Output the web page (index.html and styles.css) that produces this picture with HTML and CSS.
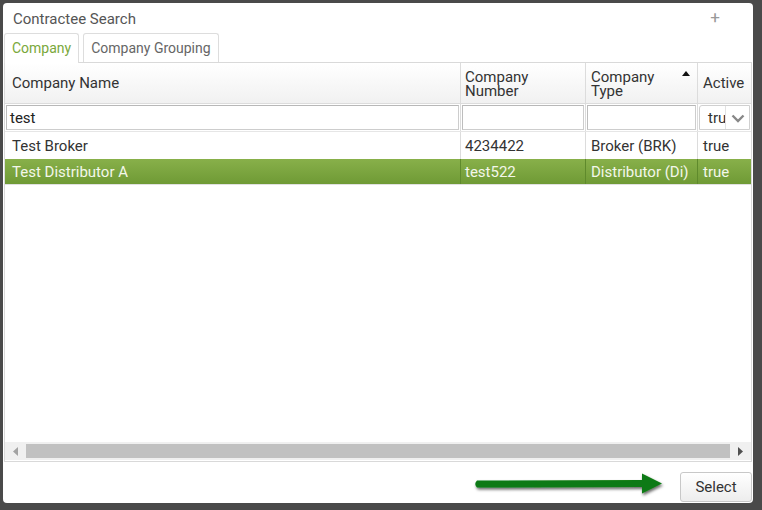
FILE: index.html
```html
<!DOCTYPE html>
<html>
<head>
<meta charset="utf-8">
<link rel="stylesheet" href="styles.css">
</head>
<body>
<div class="backdrop">
  <div class="dialog">
    <div class="titlebar">
      <span class="title">Contractee Search</span>
      <span class="plus">+</span>
    </div>
    <div class="tabs">
      <div class="tab active">Company</div>
      <div class="tab">Company Grouping</div>
    </div>
    <div class="grid">
      <div class="row head">
        <div class="cell c1"><span>Company Name</span></div>
        <div class="cell c2"><span class="two"><span class="ln">Company</span><span class="ln">Number</span></span></div>
        <div class="cell c3"><span class="two"><span class="ln">Company</span><span class="ln">Type</span></span><span class="sort"></span></div>
        <div class="cell c4"><span>Active</span></div>
      </div>
      <div class="row filter">
        <div class="fcell c1"><div class="input">test</div></div>
        <div class="fcell c2"><div class="input"></div></div>
        <div class="fcell c3"><div class="input"></div></div>
        <div class="fcell c4"><div class="select"><span class="sval">tru</span><span class="chev"><svg width="14" height="9" viewBox="0 0 14 9"><path d="M1.5 1.5 L7 7 L12.5 1.5" fill="none" stroke="#888" stroke-width="2.4"/></svg></span></div></div>
      </div>
      <div class="body">
        <div class="row data">
          <div class="cell c1">Test Broker</div>
          <div class="cell c2">4234422</div>
          <div class="cell c3">Broker (BRK)</div>
          <div class="cell c4">true</div>
        </div>
        <div class="row data selected">
          <div class="cell c1">Test Distributor A</div>
          <div class="cell c2">test522</div>
          <div class="cell c3">Distributor (Di)</div>
          <div class="cell c4">true</div>
        </div>
      </div>
      <div class="hscroll">
        <div class="sbtn"><svg width="6" height="9" viewBox="0 0 6 9"><path d="M5 0 L0 4.5 L5 9 Z" fill="#a3a3a3"/></svg></div>
        <div class="thumb"></div>
        <div class="sbtn"><svg width="6" height="9" viewBox="0 0 6 9"><path d="M0 0 L5 4.5 L0 9 Z" fill="#505050"/></svg></div>
      </div>
    </div>
    <div class="footer">
      <svg class="arrow" width="196" height="28" viewBox="0 0 196 28">
        <defs>
          <filter id="sh" x="-10%" y="-50%" width="120%" height="200%">
            <feDropShadow dx="1" dy="2" stdDeviation="1.5" flood-color="#000" flood-opacity="0.6"/>
          </filter>
        </defs>
        <path d="M5 9.5 L170 9 L170 2.5 L190 12.5 L170 22.5 L170 16 L5 16.5 Q1.5 13 5 9.5 Z" fill="#0b7a12" filter="url(#sh)"/>
      </svg>
      <button class="btn">Select</button>
    </div>
  </div>
</div>
</body>
</html>
```

FILE: styles.css
```css
* { box-sizing: border-box; }
html, body { margin: 0; padding: 0; }
body {
  width: 762px;
  height: 510px;
  background: #4a4a4a;
  font-family: Roboto, "Liberation Sans", Arial, sans-serif;
  font-size: 15px;
  color: #333;
  overflow: hidden;
}
.backdrop {
  padding: 3px 0 0 3px;
}
.dialog {
  width: 750px;
  height: 500px;
  background: #fff;
  border-radius: 4px;
  padding: 0 1px;
  display: flex;
  flex-direction: column;
}
.titlebar {
  height: 30px;
  display: flex;
  align-items: center;
  justify-content: space-between;
  padding: 1px 32px 0 9px;
}
.title {
  color: #555;
  font-size: 15px;
}
.plus {
  color: #999;
  font-size: 17px;
  margin-top: -4px;
}
.tabs {
  display: flex;
  gap: 4px;
  height: 29px;
  align-items: flex-end;
}
.tab {
  height: 29px;
  border: 1px solid #ddd;
  border-bottom: none;
  border-radius: 3px 3px 0 0;
  padding: 0 7px;
  display: flex;
  align-items: center;
  color: #666;
  font-size: 14px;
  background: #fff;
}
.tab.active {
  color: #7aa83b;
  position: relative;
  z-index: 1;
  height: 30px;
  margin-bottom: -1px;
  padding-bottom: 1px;
}
.grid {
  width: 748px;
  height: 400px;
  border: 1px solid #d9d9d9;
  display: flex;
  flex-direction: column;
}
.row {
  display: grid;
  grid-template-columns: 455px 125px 112px 54px;
}
.head {
  height: 41px;
  background: linear-gradient(#ffffff, #f1f1f1);
  border-bottom: 1px solid #dcdcdc;
}
.head .cell {
  display: flex;
  align-items: center;
  border-left: 1px solid #dcdcdc;
  color: #333;
  position: relative;
}
.two {
  display: flex;
  flex-direction: column;
}
.ln {
  display: block;
  height: 14px;
  line-height: 14px;
}
.head .c1 { border-left: none; padding-left: 7px; }
.head .c2 { padding-left: 4px; padding-top: 1px; }
.head .c3 { padding-left: 5px; padding-top: 1px; }
.head .c4 { padding-left: 5px; }
.sort {
  position: absolute;
  right: 7px;
  top: 8px;
  width: 0;
  height: 0;
  border-left: 4px solid transparent;
  border-right: 4px solid transparent;
  border-bottom: 5px solid #111;
}
.filter {
  height: 28px;
  border-bottom: 1px solid #e6e6e6;
}
.fcell {
  padding: 1px;
  border-left: 1px solid #dcdcdc;
}
.fcell.c1 { border-left: none; }
.input {
  height: 100%;
  border: 1px solid #cdcdcd;
  border-top-color: #b8b8b8;
  border-left-color: #bdbdbd;
  background: #fff;
  padding: 0 3px;
  display: flex;
  align-items: center;
  font-size: 15px;
  color: #222;
}
.select {
  height: 100%;
  border: 1px solid #d0d0d0;
  border-radius: 3px 0 0 0;
  display: flex;
  align-items: center;
  background: #fff;
  overflow: hidden;
}
.sval {
  width: 26px;
  padding-left: 8px;
  overflow: hidden;
  white-space: nowrap;
  border-right: 1px solid #e2e2e2;
  height: 100%;
  display: flex;
  align-items: center;
}
.chev {
  flex: 1;
  display: flex;
  align-items: center;
  justify-content: center;
  padding-top: 1px;
}
.body {
  flex: 1;
}
.data {
  height: 27px;
}
.data .cell {
  display: flex;
  align-items: center;
  border-left: 1px solid #dcdcdc;
  white-space: nowrap;
  overflow: hidden;
}
.data .c1 { border-left: none; padding-left: 7px; }
.data .c2 { padding-left: 4px; }
.data .c3 { padding-left: 5px; }
.data .c4 { padding-left: 5px; }
.data.selected {
  height: 26px;
  background: linear-gradient(#88b04a, #6f9a35);
  color: #f3f7ea;
  border-bottom: 1px solid #e0e0e0;
}
.data.selected .cell { border-left-color: #5f8a2c; }
.data.selected .c1 { border-left: none; }
.hscroll {
  height: 18px;
  margin-bottom: 1px;
  background: #f0f0f0;
  display: flex;
  align-items: stretch;
}
.sbtn {
  width: 21px;
  display: flex;
  align-items: center;
  justify-content: center;
}
.thumb {
  flex: 1;
  background: #c1c1c1;
  margin: 2px 0;
}
.footer {
  flex: 1;
  display: flex;
  align-items: center;
  justify-content: flex-end;
  padding: 9px 0 0 0;
}
.arrow {
  margin-right: 12px;
  margin-top: -4px;
}
.btn {
  width: 72px;
  height: 30px;
  border: 1px solid #c8c8c8;
  border-radius: 3px;
  background: linear-gradient(#ffffff, #ededed);
  font-family: Roboto, "Liberation Sans", Arial, sans-serif;
  font-size: 15px;
  color: #333;
  padding: 0;
}
```
